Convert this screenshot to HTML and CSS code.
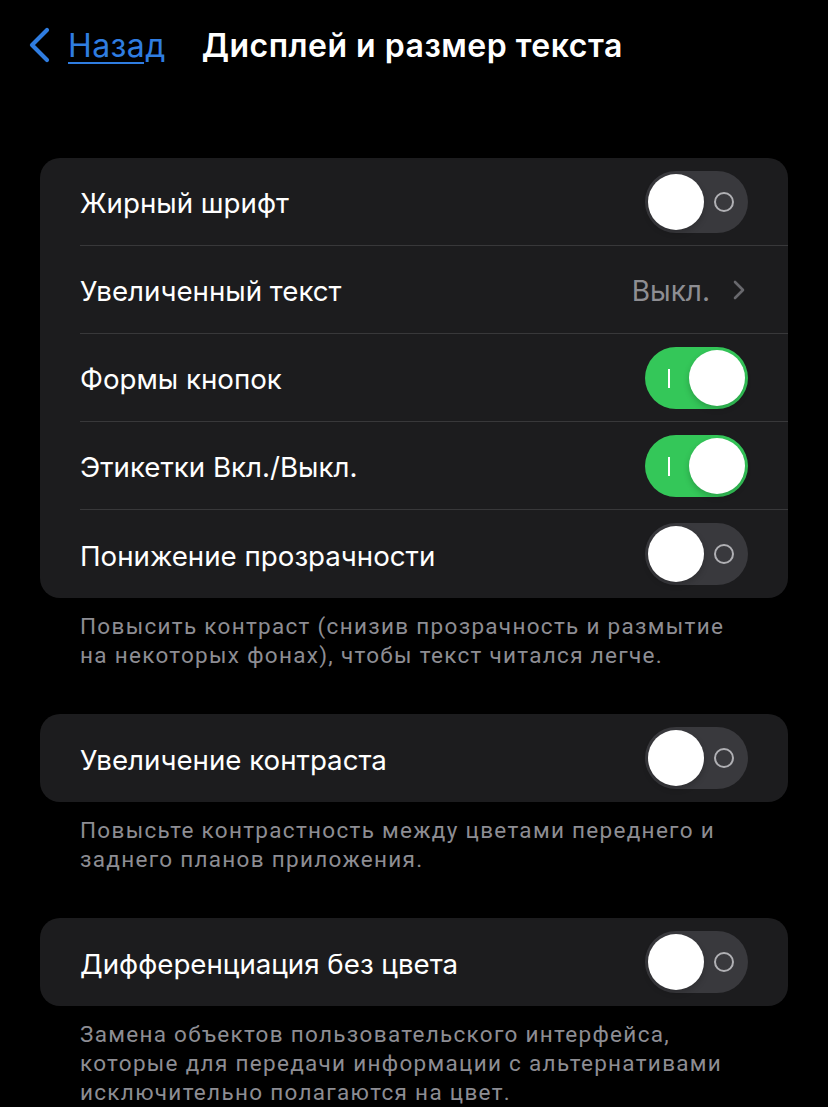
FILE: index.html
```html
<!DOCTYPE html>
<html lang="ru">
<head>
<meta charset="utf-8">
<title>Дисплей и размер текста</title>
<link rel="stylesheet" href="styles.css">
</head>
<body>
<header class="nav">
  <a class="back" href="#">
    <svg class="chev" width="24" height="36" viewBox="0 0 24 36"><path d="M20 3 L5 18 L20 33" fill="none" stroke="#2f7de1" stroke-width="4.2" stroke-linecap="round" stroke-linejoin="round"/></svg>
    <span class="back-text">Назад</span>
  </a>
  <h1 class="title">Дисплей и размер текста</h1>
</header>

<main class="content">
  <section class="group">
    <div class="card">
      <div class="row"><span class="label">Жирный шрифт</span><span class="toggle off"><span class="knob"></span><span class="mark"></span></span></div>
      <div class="row"><span class="label">Увеличенный текст</span><span class="detail">Выкл.<svg class="arrow" width="14" height="22" viewBox="0 0 14 22"><path d="M3 3 L11 11 L3 19" fill="none" stroke="#68686d" stroke-width="2.6" stroke-linecap="round" stroke-linejoin="round"/></svg></span></div>
      <div class="row"><span class="label">Формы кнопок</span><span class="toggle on"><span class="mark"></span><span class="knob"></span></span></div>
      <div class="row"><span class="label">Этикетки Вкл./Выкл.</span><span class="toggle on"><span class="mark"></span><span class="knob"></span></span></div>
      <div class="row"><span class="label">Понижение прозрачности</span><span class="toggle off"><span class="knob"></span><span class="mark"></span></span></div>
    </div>
    <p class="footer">Повысить контраст (снизив прозрачность и размытие на некоторых фонах), чтобы текст читался легче.</p>
  </section>

  <section class="group">
    <div class="card">
      <div class="row"><span class="label">Увеличение контраста</span><span class="toggle off"><span class="knob"></span><span class="mark"></span></span></div>
    </div>
    <p class="footer">Повысьте контрастность между цветами переднего и заднего планов приложения.</p>
  </section>

  <section class="group">
    <div class="card">
      <div class="row"><span class="label">Дифференциация без цвета</span><span class="toggle off"><span class="knob"></span><span class="mark"></span></span></div>
    </div>
    <p class="footer">Замена объектов пользовательского интерфейса, которые для передачи информации с альтернативами исключительно полагаются на цвет.</p>
  </section>
</main>
</body>
</html>
```

FILE: styles.css
```css
* { box-sizing: border-box; }
html, body { margin: 0; padding: 0; }
body {
  background: #000;
  color: #fff;
  font-family: Inter, "Noto Sans", sans-serif;
  width: 828px;
  height: 1107px;
  overflow: hidden;
}
.nav {
  display: flex;
  align-items: center;
  height: 90px;
  padding: 0 0 0 27px;
}
.back {
  display: flex;
  align-items: center;
  gap: 17px;
  color: #2f7de1;
  text-decoration: none;
}
.chev { display: block; }
.back-text {
  font-size: 32px;
  letter-spacing: 0.4px;
  text-decoration: underline;
  text-underline-offset: 5px;
  text-decoration-thickness: 2px;
}
.title {
  margin: 0 0 0 36px;
  font-size: 32px;
  font-weight: 600;
  letter-spacing: 0.5px;
}
.content {
  padding: 68px 40px 0 40px;
  display: flex;
  flex-direction: column;
  gap: 44px;
}
.card {
  background: #1c1c1e;
  border-radius: 20px;
  overflow: hidden;
}
.row {
  height: 88px;
  margin-left: 40px;
  padding-right: 40px;
  display: flex;
  align-items: center;
  justify-content: space-between;
  border-bottom: 1px solid #38383a;
}
.row:last-child { border-bottom: none; }
.label {
  font-size: 27.7px;
  padding-top: 3px;
}
.detail {
  display: flex;
  align-items: center;
  gap: 22px;
  color: #8e8e93;
  font-size: 28px;
  padding-top: 3px;
  padding-right: 2px;
}
.arrow { display: block; margin-top: -3px; }
.toggle {
  width: 103px;
  height: 62px;
  border-radius: 31px;
  display: flex;
  align-items: center;
  padding: 0 3px;
  position: relative;
}
.toggle.off { background: #39393d; }
.toggle.on { background: #34c759; justify-content: flex-end; }
.knob {
  width: 56px;
  height: 56px;
  border-radius: 50%;
  background: #fff;
  box-shadow: 0 3px 6px rgba(0,0,0,0.2);
}
.toggle.off .mark {
  position: absolute;
  right: 14px;
  top: 21px;
  width: 20px;
  height: 20px;
  border: 2.4px solid #b0b0b4;
  border-radius: 50%;
}
.toggle.on .mark {
  position: absolute;
  left: 23px;
  top: 22px;
  width: 2.4px;
  height: 19px;
  background: #fff;
}
.footer {
  margin: 14px 0 0 40px;
  padding-right: 40px;
  font-family: Roboto, Inter, sans-serif;
  font-size: 22.5px;
  letter-spacing: 1.3px;
  line-height: 29px;
  color: #8d8d93;
}
```
